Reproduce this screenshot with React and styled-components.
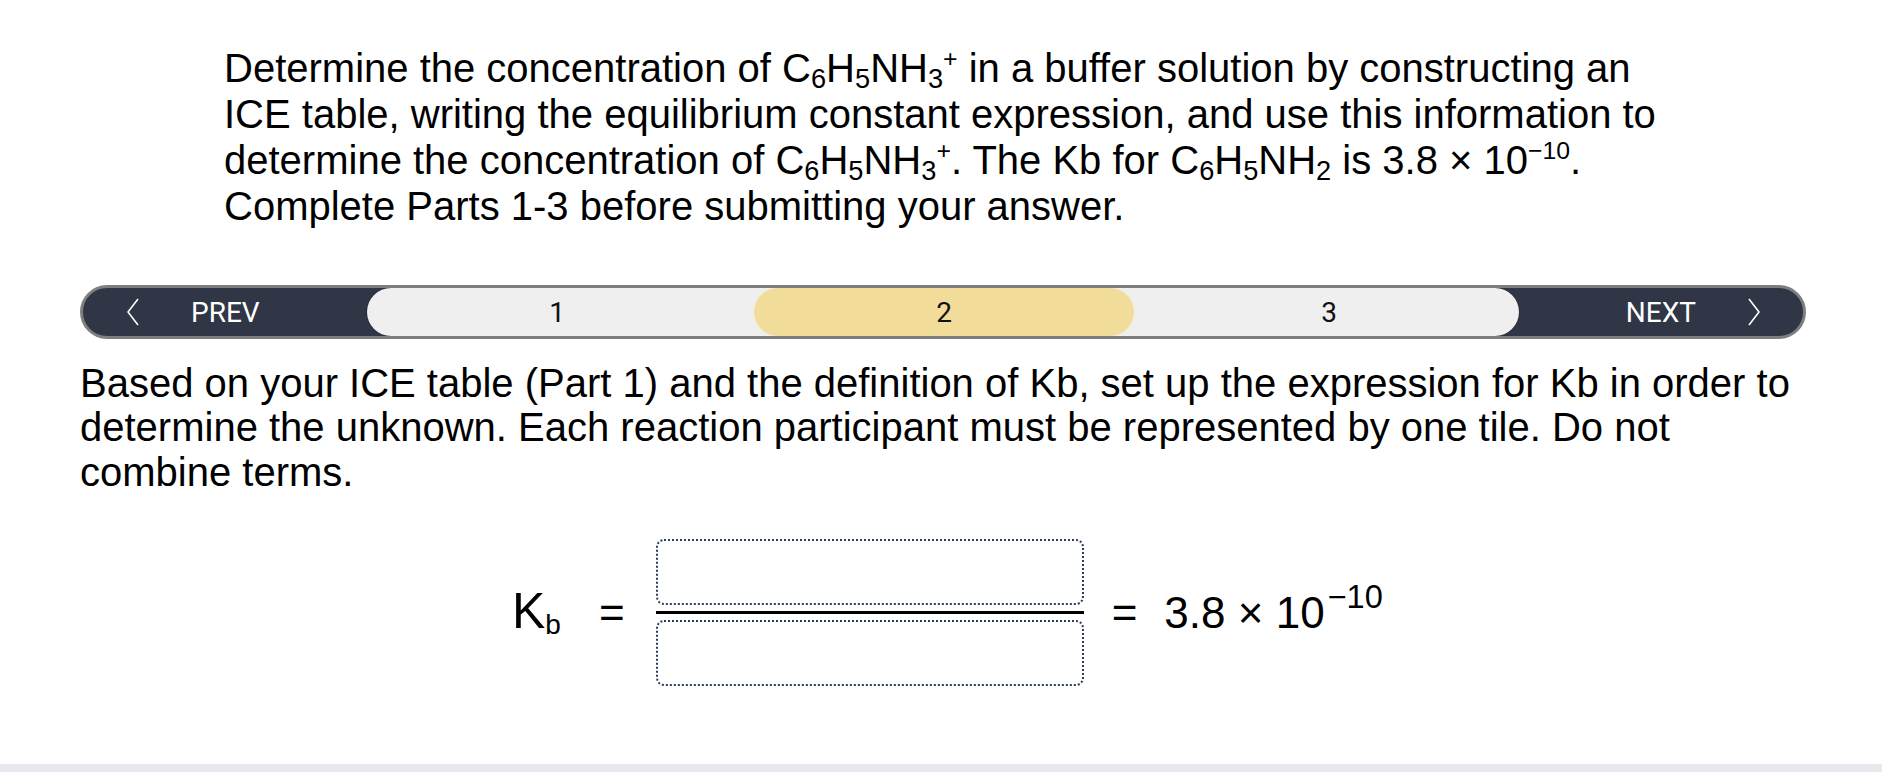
import React from 'react'
import styled, { createGlobalStyle } from 'styled-components'

const GlobalStyle = createGlobalStyle`
  html, body {
    margin: 0;
    padding: 0;
    background: #ffffff;
  }
  body {
    font-family: "Liberation Sans", Arial, Helvetica, sans-serif;
    color: #000;
  }
`

const Page = styled.div`
  min-height: 100vh;
  display: flex;
  flex-direction: column;
`

const Main = styled.main`
  flex: 1;
  padding: 45px 0 0 80px;
`

const Intro = styled.p`
  margin: 0 0 0 144px;
  width: 1460px;
  font-size: 40px;
  line-height: 46px;
`

const Sub = styled.sub`
  font-size: 0.68em;
  line-height: 0;
  vertical-align: -0.22em;
`

const Sup = styled.sup`
  font-size: 0.62em;
  line-height: 0;
  vertical-align: 0.6em;
`

const NavBar = styled.nav`
  margin-top: 56px;
  width: 1726px;
  height: 54px;
  box-sizing: border-box;
  border: 3px solid #7f7f7f;
  border-radius: 27px;
  background: #313646;
  display: flex;
  overflow: hidden;
  font-family: Roboto, "Liberation Sans", Arial, sans-serif;
`

const NavButton = styled.button`
  width: 284px;
  flex: none;
  border: 0;
  background: transparent;
  color: #fff;
  font: inherit;
  font-size: 28px;
  display: flex;
  align-items: center;
  justify-content: ${p => (p.$side === 'left' ? 'flex-start' : 'flex-end')};
  gap: 51px;
  padding: ${p => (p.$side === 'left' ? '0 0 0 43px' : '0 42px 0 0')};
  cursor: pointer;
`

const Steps = styled.div`
  flex: 1;
  display: flex;
  background: #efefef;
  border-radius: 24px;
  box-shadow: 0 0 2px rgba(0, 0, 0, 0.45);
`

const Step = styled.div`
  flex: 1;
  display: flex;
  align-items: center;
  justify-content: center;
  margin: ${p => (p.$active ? '0 5px 0 7px' : '0')};
  border-radius: 24px;
  background: ${p => (p.$active ? '#f2dc9a' : 'transparent')};
  font-size: 28px;
  color: #111;
`

const Prompt = styled.p`
  margin: 22px 0 0;
  width: 1726px;
  font-size: 40px;
  line-height: 44.4px;
`

const Equation = styled.div`
  margin-top: 45px;
  padding-left: 432px;
  display: flex;
  align-items: center;
  font-size: 44px;
`

const Term = styled.span`
  font-size: 50px;
  line-height: 1;
`

const TermSub = styled.span`
  font-size: 0.56em;
  vertical-align: -0.22em;
`

const Equals = styled.span`
  margin: ${p => p.$margin};
  line-height: 1;
`

const Fraction = styled.div`
  width: 428px;
  display: flex;
  flex-direction: column;
  gap: 6px;
`

const DropBox = styled.div`
  height: 66px;
  box-sizing: border-box;
  border: 2px dotted #2b3d5b;
  border-radius: 8px;
`

const Bar = styled.div`
  height: 3px;
  background: #000;
`

const Value = styled.span`
  line-height: 1;
  white-space: nowrap;
`

const ValueSup = styled.sup`
  font-size: 0.74em;
  line-height: 0;
  vertical-align: 0.6em;
  margin-left: 3px;
`

const Footer = styled.div`
  height: 8px;
  background: #e9e8ef;
`

const Chevron = ({ dir }) => (
  <svg width="14" height="28" viewBox="0 0 14 28" fill="none">
    <polyline
      points={dir === 'left' ? '12,1 2,14 12,27' : '2,1 12,14 2,27'}
      stroke="#fff"
      strokeWidth="1.6"
      strokeLinejoin="round"
    />
  </svg>
)

const Aniline = ({ ion }) => (
  <>
    C<Sub>6</Sub>H<Sub>5</Sub>NH<Sub>{ion ? 3 : 2}</Sub>
    {ion && <Sup>+</Sup>}
  </>
)

export default function App() {
  return (
    <Page>
      <GlobalStyle />
      <Main>
        <Intro>
          Determine the concentration of <Aniline ion /> in a buffer solution by constructing an
          ICE table, writing the equilibrium constant expression, and use this information to
          determine the concentration of <Aniline ion />. The Kb for <Aniline /> is 3.8 × 10
          <Sup>−10</Sup>. Complete Parts 1-3 before submitting your answer.
        </Intro>

        <NavBar>
          <NavButton $side="left">
            <Chevron dir="left" />
            PREV
          </NavButton>
          <Steps>
            <Step>1</Step>
            <Step $active>2</Step>
            <Step>3</Step>
          </Steps>
          <NavButton $side="right">
            NEXT
            <Chevron dir="right" />
          </NavButton>
        </NavBar>

        <Prompt>
          Based on your ICE table (Part 1) and the definition of Kb, set up the expression for Kb in
          order to determine the unknown. Each reaction participant must be represented by one tile.
          Do not combine terms.
        </Prompt>

        <Equation>
          <Term>
            K<TermSub>b</TermSub>
          </Term>
          <Equals $margin="0 31px 0 38px">=</Equals>
          <Fraction>
            <DropBox />
            <Bar />
            <DropBox />
          </Fraction>
          <Equals $margin="0 27px 0 28px">=</Equals>
          <Value>
            3.8 × 10<ValueSup>−10</ValueSup>
          </Value>
        </Equation>
      </Main>
      <Footer />
    </Page>
  )
}
